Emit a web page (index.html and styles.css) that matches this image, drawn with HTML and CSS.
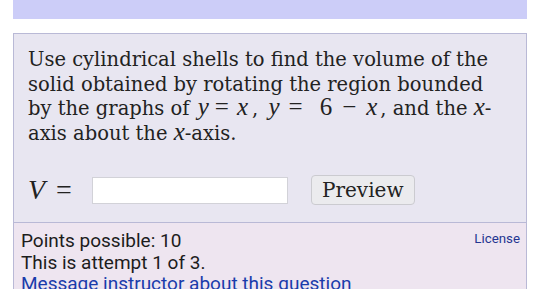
FILE: index.html
```html
<!DOCTYPE html>
<html>
<head>
<meta charset="utf-8">
<link rel="stylesheet" href="styles.css">
</head>
<body>
<div class="topbar"></div>
<div class="question">
  <div class="qtext">
    <p class="prompt">Use cylindrical shells to find the volume of the solid obtained by rotating the region bounded by the graphs of <span class="m e1"><i>y</i><span class="eq1">=</span><i class="x1">x</i></span>, <span class="m e2"><i>y</i><span class="eq2">=</span>6<span class="minus">−</span><i class="x2">x</i></span>, and the <span class="m"><i>x</i></span>-axis about the <span class="m"><i>x</i></span>-axis.</p>
    <div class="answer">
      <span class="m big"><i>V</i><span class="eqv">=</span></span>
      <input class="field" type="text">
      <button class="preview">Preview</button>
    </div>
  </div>
  <div class="footer">
    <div class="info">
      <div>Points possible: 10</div>
      <div>This is attempt 1 of 3.</div>
      <a class="msg" href="#">Message instructor about this question</a>
    </div>
    <a class="license" href="#">License</a>
  </div>
</div>
</body>
</html>
```
FILE: styles.css
```css
html, body {
  margin: 0;
  padding: 0;
  background: #ffffff;
  overflow: hidden;
}
.topbar {
  margin: 0 13px;
  height: 19px;
  background: #cccdf8;
}
.question {
  margin: 14px 13px 0 13px;
  border: 1px solid #b9b9d6;
  background: #e8e6f1;
}
.qtext {
  padding: 14px 26px 17px 14px;
}
.prompt {
  margin: 0;
  font-family: "DejaVu Serif", serif;
  font-size: 19.5px;
  line-height: 24.5px;
  color: #222222;
}
.m {
  font-family: "Liberation Serif", "Times New Roman", serif;
  font-size: 25px;
  line-height: 20px;
  white-space: nowrap;
}
.m i {
  font-style: italic;
}
.e1 {
  margin-left: 2px;
}
.eq1 {
  margin: 0 8px 0 6px;
}
.x1 {
  margin-right: 4px;
}
.e2 {
  margin-left: 4px;
}
.eq2 {
  margin: 0 17px 0 9px;
}
.minus {
  margin: 0 10px 0 10px;
}
.x2 {
  margin-right: 3px;
}
.answer {
  display: flex;
  align-items: center;
  margin-top: 29px;
}
.big {
  font-size: 28px;
  width: 64px;
  color: #222;
}
.eqv {
  margin-left: 11px;
}
.field {
  width: 196px;
  height: 27px;
  box-sizing: border-box;
  border: 1px solid #d2d2d8;
  background: #ffffff;
  margin: 0;
  padding: 0;
}
.preview {
  margin-left: 23px;
  height: 30px;
  padding: 0 10px;
  font-family: "DejaVu Serif", serif;
  font-size: 20px;
  color: #222;
  background: #ebebee;
  border: 1px solid #cbcbd0;
  border-radius: 4px;
}
.footer {
  border-top: 1px solid #b9b9d6;
  background: #eee5f0;
  display: flex;
  justify-content: space-between;
  padding: 7px 6px 10px 7px;
  font-family: Roboto, sans-serif;
}
.info {
  font-size: 19px;
  line-height: 21.5px;
  color: #1c1c1c;
}
.msg {
  color: #1a3cab;
  text-decoration: none;
}
.license {
  font-size: 13.3px;
  color: #243591;
  text-decoration: none;
  margin-top: 1px;
}
```
